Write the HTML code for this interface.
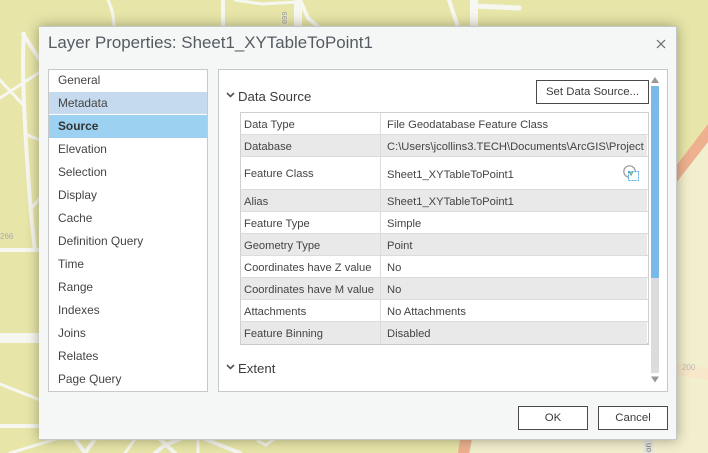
<!DOCTYPE html>
<html><head><meta charset="utf-8">
<style>
html,body{margin:0;padding:0}
body{width:708px;height:453px;overflow:hidden;position:relative;background:#e7e6a8;font-family:"Liberation Sans",sans-serif;color:#3c3c3c}
#map{position:absolute;left:0;top:0}
#dlg{position:absolute;left:39px;top:26px;width:637px;height:412px;background:#f5f7f7;border:1px solid #c4c8c8;border-width:1px 1px 1px 0;box-shadow:0 0 12px rgba(60,60,40,.45)}
.a{position:absolute;white-space:nowrap}
#title{left:9px;top:4px;font-size:16.9px;line-height:24px;color:#555b61}
#list{left:9px;top:42px;width:158px;height:321px;background:#fff;border:1px solid #c8c8c8}
.i{position:absolute;left:0;width:158px;height:23px;line-height:23px;padding-left:9px;box-sizing:border-box;font-size:11.9px;color:#444}
#panel{left:179px;top:42px;width:448px;height:321px;background:#fff;border:1px solid #c8c8c8}
.h{font-size:13.2px;color:#3c3c3c;line-height:18px}
.btn{position:absolute;box-sizing:border-box;border:1px solid #4a4a4a;background:#fff;text-align:center;font-size:11.4px;color:#3c3c3c}
.r{position:absolute;left:240px;width:409px;box-sizing:border-box;font-size:11.2px;color:#444}
.r span{position:absolute;top:1px;white-space:nowrap}
.r .k{left:4px}.r .v{left:147px}
.g{background:#e9e9e9}
</style></head>
<body>
<svg id="map" width="708" height="453" viewBox="0 0 708 453">
<rect width="708" height="453" fill="#e7e6a8"/>
<path d="M708 124L676 170V439H472L470 453H708Z" fill="#f2efce"/>
<path d="M708 124L676 166V183L708 142Z" fill="#eeb08f"/>
<path d="M676 364L708 368V380L676 375Z" fill="#f8e7c8"/>
<path d="M460 439L458 453H469L472 439Z" fill="#eeb08f"/>
<g fill="none" stroke="#f7f7f2" stroke-linecap="round">
<path d="M24 34C20 80 30 210 35 250" stroke-width="4"/>
<path d="M23 34L40 60" stroke-width="4"/>
<path d="M0 98L40 72" stroke-width="3"/>
<path d="M0 80L25 107" stroke-width="3"/>
<path d="M25 134L40 140" stroke-width="3"/>
<path d="M30 210L40 198" stroke-width="3"/>
<path d="M0 250H40" stroke-width="4"/>
<path d="M0 338H40" stroke-width="10"/>
<path d="M0 384L40 400" stroke-width="3"/>
<path d="M0 426H40" stroke-width="4"/>
<path d="M108 0C113 10 114 20 114 27" stroke-width="3"/>
<path d="M223 0V27" stroke-width="4"/>
<path d="M235 0L262 4L297 2" stroke-width="3"/>
<path d="M298 0V27" stroke-width="8"/>
<path d="M300 0L308 18L322 30" stroke-width="4"/>
<path d="M449 0L458 27" stroke-width="4"/>
<path d="M474 0V27" stroke-width="8"/>
<path d="M474 6L519 8" stroke-width="5"/>
<path d="M10 453L56 439" stroke-width="3"/>
<path d="M75 439L85 453L95 439" stroke-width="4"/>
<path d="M135 439L125 453" stroke-width="3"/>
<path d="M155 453L165 445L180 439M160 439L175 453" stroke-width="4"/>
<path d="M198 439V453" stroke-width="3"/>
<path d="M205 439L240 453" stroke-width="4"/>
<path d="M258 441L266 445L274 439" stroke-width="3"/>
</g>
<rect x="281" y="12" width="7" height="15" fill="#e8e8c0"/>
<text x="0" y="239" font-family="Liberation Sans" font-size="8" fill="#aaa">266</text>
<text x="682" y="370" font-family="Liberation Sans" font-size="8" fill="#bbb">200</text>
<text transform="translate(287,24) rotate(-90)" font-family="Liberation Sans" font-size="7.5" fill="#999">699</text>
<rect x="644" y="439" width="9" height="14" fill="#e6e6e0"/>
<text transform="translate(651,452) rotate(-90)" font-family="Liberation Sans" font-size="8" fill="#777">on</text>
</svg>
<div id="dlg">
<div class="a" id="title">Layer Properties: Sheet1_XYTableToPoint1</div>
<svg class="a" style="left:617px;top:12px" width="10" height="10" viewBox="0 0 10 10"><path d="M1 1L9 9M9 1L1 9" stroke="#666" stroke-width="1.200" fill="none"/></svg>
<div class="a" id="list">
<div class="i" style="top:-1px">General</div>
<div class="i" style="top:22px;background:#c5daee;height:22px;line-height:22px">Metadata</div>
<div class="i" style="top:45px;background:#9dd1f1;font-weight:bold;color:#333">Source</div>
<div class="i" style="top:68px">Elevation</div>
<div class="i" style="top:91px">Selection</div>
<div class="i" style="top:114px">Display</div>
<div class="i" style="top:137px">Cache</div>
<div class="i" style="top:160px">Definition Query</div>
<div class="i" style="top:183px">Time</div>
<div class="i" style="top:206px">Range</div>
<div class="i" style="top:229px">Indexes</div>
<div class="i" style="top:252px">Joins</div>
<div class="i" style="top:275px">Relates</div>
<div class="i" style="top:298px">Page Query</div>
</div>
<div class="a" id="panel"></div>
</div>

<svg class="a" style="left:226px;top:92px" width="9" height="7" viewBox="0 0 9 7"><path d="M1 1L4.500 4.500L8 1" stroke="#555" stroke-width="1.600" fill="none"/></svg>
<div class="a h" style="left:238px;top:88px">Data Source</div>
<div class="btn" style="left:536px;top:80px;width:113px;height:24px;line-height:22px">Set Data Source...</div>

<div class="a" style="left:240px;top:112px;width:409px;height:233px;border:1px solid #cfcfcf;border-bottom:2px solid #c8c8c8;box-sizing:border-box;background:#fff"></div>

<div class="r" style="top:113px;height:22px;line-height:22px"><span class="k">Data Type</span><span class="v">File Geodatabase Feature Class</span></div>
<div class="r g" style="top:135px;height:22px;line-height:22px;left:241px;width:406px"><span class="k" style="left:3px">Database</span><span class="v" style="left:146px">C:\Users\jcollins3.TECH\Documents\ArcGIS\Project</span></div>
<div class="r" style="top:157px;height:33px;line-height:32px"><span class="k">Feature Class</span><span class="v" style="top:2px">Sheet1_XYTableToPoint1</span></div>
<div class="r g" style="top:190px;height:22px;line-height:22px;left:241px;width:406px"><span class="k" style="left:3px">Alias</span><span class="v" style="left:146px">Sheet1_XYTableToPoint1</span></div>
<div class="r" style="top:212px;height:22px;line-height:22px"><span class="k">Feature Type</span><span class="v">Simple</span></div>
<div class="r g" style="top:234px;height:22px;line-height:22px;left:241px;width:406px"><span class="k" style="left:3px">Geometry Type</span><span class="v" style="left:146px">Point</span></div>
<div class="r" style="top:256px;height:22px;line-height:22px"><span class="k">Coordinates have Z value</span><span class="v">No</span></div>
<div class="r g" style="top:278px;height:22px;line-height:22px;left:241px;width:406px"><span class="k" style="left:3px">Coordinates have M value</span><span class="v" style="left:146px">No</span></div>
<div class="r" style="top:300px;height:22px;line-height:22px"><span class="k">Attachments</span><span class="v">No Attachments</span></div>
<div class="r g" style="top:322px;height:22px;line-height:22px;left:241px;width:406px"><span class="k" style="left:3px">Feature Binning</span><span class="v" style="left:146px">Disabled</span></div>

<svg class="a" style="left:240px;top:112px" width="409" height="233">
<g stroke="#dcdcdc" fill="none">
<path d="M0.500 22.500H408M0.500 44.500H408M0.500 77.500H408M0.500 99.500H408M0.500 121.500H408M0.500 143.500H408M0.500 165.500H408M0.500 187.500H408M0.500 209.500H408"/>
<path d="M140.500 0V232"/>
</g>
</svg>

<svg class="a" style="left:622px;top:164px" width="18" height="18" viewBox="0 0 18 18">
<circle cx="7.500" cy="7.500" r="5.700" fill="#fff" stroke="#999" stroke-width="1.200"/>
<rect x="6.500" y="7.500" width="10" height="9" fill="#fff" stroke="#4aa8e0" stroke-dasharray="2 1"/>
<path d="M6.500 8H11.500L9 12.500Z" fill="#7fb89a"/>
</svg>

<svg class="a" style="left:226px;top:364px" width="9" height="7" viewBox="0 0 9 7"><path d="M1 1L4.500 4.500L8 1" stroke="#555" stroke-width="1.600" fill="none"/></svg>
<div class="a h" style="left:238px;top:360px">Extent</div>

<svg class="a" style="left:651px;top:77px" width="8" height="306" viewBox="0 0 8 306">
<path d="M4 0L8 6H0Z" fill="#999"/>
<rect x="0" y="9" width="8" height="192" fill="#79bbe8"/>
<rect x="0" y="201" width="8" height="95" fill="#dcdcdc"/>
<path d="M0 299.500H8L4 305.500Z" fill="#999"/>
</svg>

<div class="btn" style="left:518px;top:406px;width:70px;height:24px;line-height:23px">OK</div>
<div class="btn" style="left:598px;top:406px;width:70px;height:24px;line-height:23px">Cancel</div>
</body></html>
